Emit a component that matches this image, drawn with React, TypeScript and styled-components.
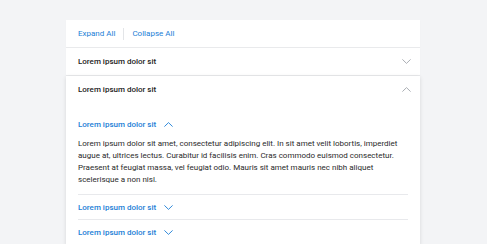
import React from "react";
import styled, { createGlobalStyle } from "styled-components";

const Global = createGlobalStyle`
  html, body { margin: 0; padding: 0; background: #f3f4f6; }
  body { font-family: Roboto, "Liberation Sans", sans-serif; -webkit-font-smoothing: antialiased; }
`;

const Page = styled.div`
  padding: 20px 0 0 66px;
  height: 244px;
  box-sizing: border-box;
  overflow: hidden;
`;

const Stack = styled.div`
  width: 354px;
  display: flex;
  flex-direction: column;
  gap: 1px;
`;

const Toolbar = styled.div`
  background: #fff;
  height: 27px;
  display: flex;
  align-items: center;
  padding: 0 12px;
  box-shadow: 0 1px 1px rgba(0, 0, 0, 0.04);
`;

const LinkButton = styled.button`
  border: 0;
  background: none;
  padding: 0;
  font: inherit;
  font-size: 8px;
  color: #1b7ed6;
  cursor: pointer;
`;

const Divider = styled.span`
  width: 1px;
  height: 12px;
  background: #e3e5e8;
  margin: 0 8px;
`;

const Panel = styled.div<{ $open?: boolean }>`
  background: #fff;
  box-shadow: ${(p) =>
    p.$open ? "0 1px 4px rgba(0, 0, 0, 0.12)" : "0 1px 1px rgba(0, 0, 0, 0.04)"};
`;

const PanelHeader = styled.div`
  height: 27px;
  display: flex;
  align-items: center;
  justify-content: space-between;
  padding: 0 9px 0 12px;
  font-size: 8px;
  font-weight: 500;
  color: #222;
`;

const PanelBody = styled.div`
  padding: 9px 12px 0 12px;
`;

const SubItem = styled.div`
  border-bottom: 1px solid #e8e9ec;
`;

const SubHeader = styled.div`
  height: 24px;
  display: flex;
  align-items: center;
  gap: 8px;
  font-size: 8px;
  font-weight: 500;
  color: #1b7ed6;
`;

const SubText = styled.p`
  margin: 2px 0 0 0;
  padding-bottom: 8px;
  font-size: 8px;
  line-height: 12px;
  color: #2a2a2a;
`;

const Chevron = ({ up, color }: { up?: boolean; color: string }) => (
  <svg width="9" height="5" viewBox="0 0 9 5" fill="none">
    <path
      d={up ? "M0.4 4.6 L4.5 0.6 L8.6 4.6" : "M0.4 0.4 L4.5 4.4 L8.6 0.4"}
      stroke={color}
      strokeWidth="0.9"
    />
  </svg>
);

const lorem =
  "Lorem ipsum dolor sit amet, consectetur adipiscing elit. In sit amet velit lobortis, imperdiet augue at, ultrices lectus. Curabitur id facilisis enim. Cras commodo euismod consectetur. Praesent at feugiat massa, vel feugiat odio. Mauris sit amet mauris nec nibh aliquet scelerisque a non nisl.";

export default function App() {
  return (
    <>
      <Global />
      <Page>
        <Stack>
          <Toolbar>
            <LinkButton>Expand All</LinkButton>
            <Divider />
            <LinkButton>Collapse All</LinkButton>
          </Toolbar>
          <Panel>
            <PanelHeader>
              <span>Lorem ipsum dolor sit</span>
              <Chevron color="#a0a5ab" />
            </PanelHeader>
          </Panel>
          <Panel $open>
            <PanelHeader>
              <span>Lorem ipsum dolor sit</span>
              <Chevron up color="#a0a5ab" />
            </PanelHeader>
            <PanelBody>
              <SubItem>
                <SubHeader>
                  <span>Lorem ipsum dolor sit</span>
                  <Chevron up color="#1b7ed6" />
                </SubHeader>
                <SubText>{lorem}</SubText>
              </SubItem>
              <SubItem>
                <SubHeader>
                  <span>Lorem ipsum dolor sit</span>
                  <Chevron color="#1b7ed6" />
                </SubHeader>
              </SubItem>
              <SubItem>
                <SubHeader>
                  <span>Lorem ipsum dolor sit</span>
                  <Chevron color="#1b7ed6" />
                </SubHeader>
              </SubItem>
            </PanelBody>
          </Panel>
        </Stack>
      </Page>
    </>
  );
}
